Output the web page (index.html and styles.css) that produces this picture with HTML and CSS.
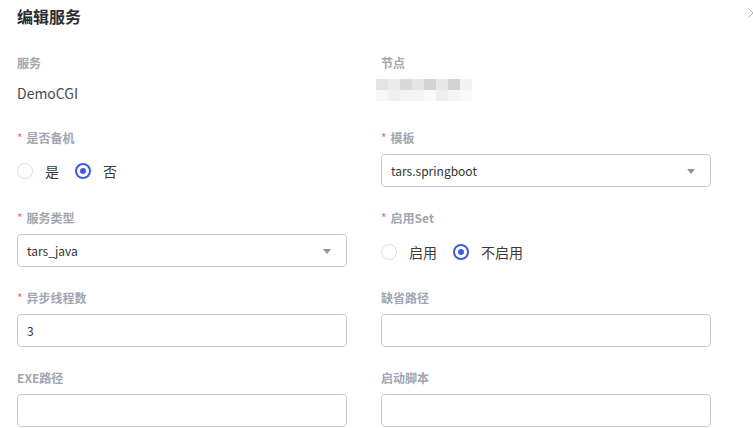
FILE: index.html
```html
<!DOCTYPE html>
<html lang="zh-CN">
<head>
<meta charset="utf-8">
<title>编辑服务</title>
<link rel="stylesheet" href="styles.css">
</head>
<body>
<div class="dialog">
  <svg class="close" width="10" height="10" viewBox="0 0 10 10"><path d="M0.5 0.5 L9.5 9.5 M9.5 0.5 L0.5 9.5" stroke="#b4b4b4" stroke-width="1" fill="none"/></svg>
  <h1 class="title">编辑服务</h1>
  <div class="form">
    <div class="item item-static">
      <div class="label">服务</div>
      <div class="static">DemoCGI</div>
    </div>
    <div class="item item-static">
      <div class="label">节点</div>
      <div class="static">
        <div class="mosaic">
          <span style="background:#e4e4e4"></span><span style="background:#ececec"></span><span style="background:#dadada"></span><span style="background:#e6e6e6"></span><span style="background:#d3d3d3"></span><span style="background:#e8e8e8"></span><span style="background:#d3d3d3"></span><span style="background:#f3f3f3"></span>
          <span style="background:#f7f7f7"></span><span style="background:#f0f0f0"></span><span style="background:#f4f4f4"></span><span style="background:#f4f4f4"></span><span style="background:#f9f9f9"></span><span style="background:#eeeeee"></span><span style="background:#f5f5f5"></span><span style="background:#f9f9f9"></span>
        </div>
      </div>
    </div>

    <div class="item">
      <div class="label"><span class="req">*</span>是否备机</div>
      <div class="radios">
        <label class="radio"><span class="dot"></span><span class="rtext">是</span></label>
        <label class="radio on"><span class="dot"></span><span class="rtext">否</span></label>
      </div>
    </div>
    <div class="item">
      <div class="label"><span class="req">*</span>模板</div>
      <div class="box select">tars.springboot<span class="arrow"></span></div>
    </div>

    <div class="item">
      <div class="label"><span class="req">*</span>服务类型</div>
      <div class="box select">tars_java<span class="arrow"></span></div>
    </div>
    <div class="item">
      <div class="label"><span class="req">*</span>启用Set</div>
      <div class="radios radios-low">
        <label class="radio"><span class="dot"></span><span class="rtext">启用</span></label>
        <label class="radio on"><span class="dot"></span><span class="rtext">不启用</span></label>
      </div>
    </div>

    <div class="item">
      <div class="label"><span class="req">*</span>异步线程数</div>
      <div class="box">3</div>
    </div>
    <div class="item">
      <div class="label">缺省路径</div>
      <div class="box"></div>
    </div>

    <div class="item">
      <div class="label">EXE路径</div>
      <div class="box"></div>
    </div>
    <div class="item">
      <div class="label">启动脚本</div>
      <div class="box"></div>
    </div>
  </div>
</div>
</body>
</html>
```

FILE: styles.css
```css
html, body {
  margin: 0;
  padding: 0;
  background: #ffffff;
}
body {
  font-family: "Noto Sans CJK SC", "Noto Sans", sans-serif;
  color: #333;
  overflow: hidden;
}
.dialog {
  position: relative;
  padding: 0 42px 0 17px;
  height: 428px;
}
.close {
  position: absolute;
  left: 748px;
  top: 8px;
}
.title {
  margin: 0 0 20px;
  height: 33px;
  line-height: 33px;
  font-size: 16px;
  font-weight: 700;
  color: #2b2d33;
}
.form {
  display: grid;
  grid-template-columns: 330px 330px;
  column-gap: 34px;
}
.item {
  height: 80px;
}
.item-static {
  height: 75px;
}
.label {
  height: 20px;
  line-height: 20px;
  font-size: 12px;
  font-weight: 700;
  color: #a1a6b0;
  margin-bottom: 6px;
}
.req {
  color: #f56c6c;
  font-weight: 400;
  margin-right: 4px;
}
.static {
  height: 28px;
  line-height: 28px;
  font-size: 14px;
  color: #4a4a4a;
}
.mosaic {
  display: grid;
  grid-template-columns: repeat(8, 12px);
  grid-template-rows: 11px 11px;
  margin: 4px 0 0 -5px;
  width: 96px;
}
.radios {
  display: flex;
  align-items: center;
  height: 33px;
}
.radios-low {
  padding-top: 2px;
  box-sizing: border-box;
}
.radio {
  display: flex;
  align-items: center;
  margin-right: 16px;
  font-size: 14px;
  color: #3a3a3a;
}
.dot {
  width: 16px;
  height: 16px;
  box-sizing: border-box;
  border-radius: 50%;
  border: 1px solid #dcdfe6;
  background: #fff;
  margin-right: 12px;
  position: relative;
}
.radio.on .dot {
  border: 2.5px solid #3f5be3;
}
.radio.on .dot::after {
  content: "";
  position: absolute;
  width: 6px;
  height: 6px;
  border-radius: 50%;
  background: #3f5be3;
  left: 50%;
  top: 50%;
  transform: translate(-50%, -50%);
}
.box {
  position: relative;
  height: 33px;
  box-sizing: border-box;
  border: 1px solid #c6cad3;
  border-radius: 4px;
  padding: 0 9px;
  line-height: 31px;
  font-size: 12px;
  color: #333;
}
.arrow {
  position: absolute;
  right: 15px;
  top: 14px;
  width: 0;
  height: 0;
  border-left: 4px solid transparent;
  border-right: 4px solid transparent;
  border-top: 5px solid #8e939c;
}
```
